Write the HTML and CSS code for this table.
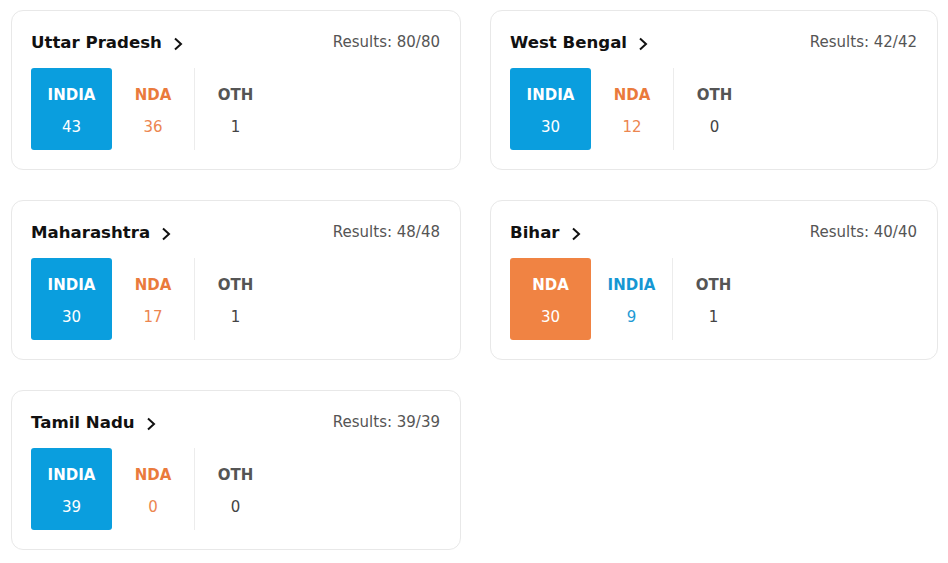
FILE: index.html
```html
<!DOCTYPE html>
<html lang="en">
<head>
  <meta charset="UTF-8">
  <title>State Results</title>
  <link rel="stylesheet" href="styles.css">
</head>
<body>
  <div class="grid">
    <!-- Uttar Pradesh -->
    <div class="card">
      <div class="card-head">
        <a class="state">Uttar Pradesh <svg class="chev" viewBox="0 0 10 14"><path d="M2 1.5l6 5.5-6 5.5"/></svg></a>
        <span class="results">Results: 80/80</span>
      </div>
      <div class="tally">
        <div class="party lead india"><span class="name">INDIA</span><span class="seats">43</span></div>
        <div class="party nda"><span class="name">NDA</span><span class="seats">36</span></div>
        <div class="party oth"><span class="name">OTH</span><span class="seats">1</span></div>
      </div>
    </div>

    <!-- West Bengal -->
    <div class="card">
      <div class="card-head">
        <a class="state">West Bengal <svg class="chev" viewBox="0 0 10 14"><path d="M2 1.5l6 5.5-6 5.5"/></svg></a>
        <span class="results">Results: 42/42</span>
      </div>
      <div class="tally">
        <div class="party lead india"><span class="name">INDIA</span><span class="seats">30</span></div>
        <div class="party nda"><span class="name">NDA</span><span class="seats">12</span></div>
        <div class="party oth"><span class="name">OTH</span><span class="seats">0</span></div>
      </div>
    </div>

    <!-- Maharashtra -->
    <div class="card">
      <div class="card-head">
        <a class="state">Maharashtra <svg class="chev" viewBox="0 0 10 14"><path d="M2 1.5l6 5.5-6 5.5"/></svg></a>
        <span class="results">Results: 48/48</span>
      </div>
      <div class="tally">
        <div class="party lead india"><span class="name">INDIA</span><span class="seats">30</span></div>
        <div class="party nda"><span class="name">NDA</span><span class="seats">17</span></div>
        <div class="party oth"><span class="name">OTH</span><span class="seats">1</span></div>
      </div>
    </div>

    <!-- Bihar -->
    <div class="card">
      <div class="card-head">
        <a class="state">Bihar <svg class="chev" viewBox="0 0 10 14"><path d="M2 1.5l6 5.5-6 5.5"/></svg></a>
        <span class="results">Results: 40/40</span>
      </div>
      <div class="tally">
        <div class="party lead nda"><span class="name">NDA</span><span class="seats">30</span></div>
        <div class="party india"><span class="name">INDIA</span><span class="seats">9</span></div>
        <div class="party oth"><span class="name">OTH</span><span class="seats">1</span></div>
      </div>
    </div>

    <!-- Tamil Nadu -->
    <div class="card">
      <div class="card-head">
        <a class="state">Tamil Nadu <svg class="chev" viewBox="0 0 10 14"><path d="M2 1.5l6 5.5-6 5.5"/></svg></a>
        <span class="results">Results: 39/39</span>
      </div>
      <div class="tally">
        <div class="party lead india"><span class="name">INDIA</span><span class="seats">39</span></div>
        <div class="party nda"><span class="name">NDA</span><span class="seats">0</span></div>
        <div class="party oth"><span class="name">OTH</span><span class="seats">0</span></div>
      </div>
    </div>
  </div>
</body>
</html>
```

FILE: styles.css
```css
/* General */
body {
  margin: 0;
  background: #fff;
  font-family: "DejaVu Sans", Verdana, sans-serif;
  color: #333;
}

.grid {
  display: grid;
  grid-template-columns: 450px 448px;
  column-gap: 29px;
  row-gap: 30px;
  padding: 10px 0 0 11px;
}

/* Card */
.card {
  height: 160px;
  box-sizing: border-box;
  border: 1px solid #e8e8e8;
  border-radius: 12px;
  padding: 19px 20px 0 19px;
}

.card-head {
  display: flex;
  justify-content: space-between;
  align-items: center;
  height: 24px;
}

.state {
  display: flex;
  align-items: center;
  font-size: 16.6px;
  font-weight: bold;
  color: #111;
}

.chev {
  width: 10px;
  height: 14px;
  margin-left: 11px;
  margin-top: 3px;
  fill: none;
  stroke: #111;
  stroke-width: 2;
}

.results {
  font-size: 15px;
  color: #555;
  margin-top: -1px;
}

/* Party tally */
.tally {
  display: flex;
  margin-top: 14px;
}

.party {
  width: 81px;
  height: 82px;
  box-sizing: border-box;
  padding-top: 17px;
  display: flex;
  flex-direction: column;
  align-items: center;
  border-radius: 3px;
}

.party .name {
  font-size: 15px;
  font-weight: bold;
  line-height: 20px;
}

.party .seats {
  font-size: 15px;
  line-height: 20px;
  margin-top: 12px;
}

.india .name { color: #1597d3; }
.india .seats { color: #1e9ad4; }
.nda .name { color: #ea7a3c; }
.nda .seats { color: #ec8650; }
.oth .name { color: #555; }
.oth .seats { color: #444; }

.nda:not(.lead) {
  width: 82px;
}

.oth {
  width: 82px;
  border-left: 1px solid #ececec;
  border-radius: 0;
}

.lead.india { background: #0a9ede; }
.lead.nda { background: #f08343; }
.lead .name,
.lead .seats { color: #fff; }
```
